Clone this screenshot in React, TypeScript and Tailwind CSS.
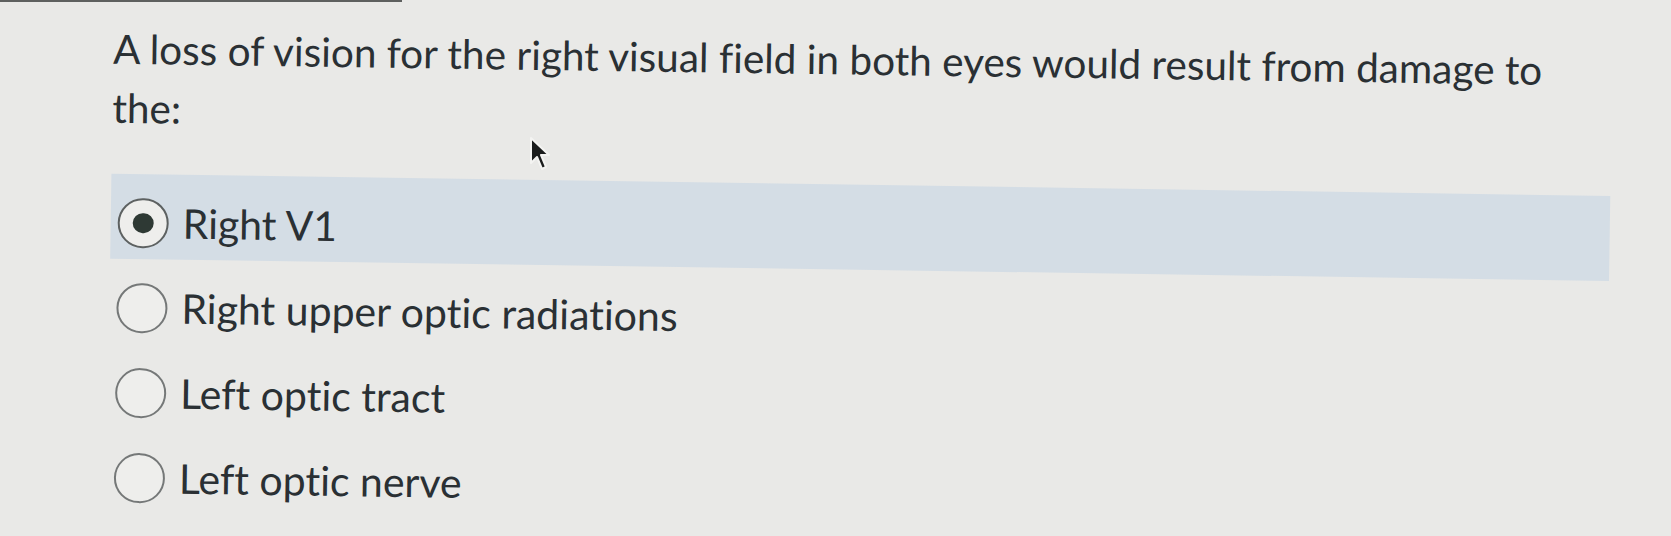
import React from "react";

const options = [
  { label: "Right V1", selected: true },
  { label: "Right upper optic radiations", selected: false },
  { label: "Left optic tract", selected: false },
  { label: "Left optic nerve", selected: false },
];

function Radio({ selected }: { selected: boolean }) {
  return (
    <span
      className={`flex h-[50px] w-[51px] shrink-0 items-center justify-center rounded-full border-2 bg-[#eeeeec] ${
        selected ? "border-[#5d6161]" : "border-[#757878]"
      }`}
    >
      {selected && <span className="h-[20px] w-[21px] rounded-full bg-[#2e3934]" />}
    </span>
  );
}

function Cursor() {
  return (
    <svg
      className="absolute left-[528px] top-[136px]"
      width="24"
      height="36"
      viewBox="0 0 24 36"
    >
      <path
        d="M3 2 L3 27 L9 21 L14 33 L18 31 L13 19 L21 19 Z"
        fill="#1b1d1d"
        stroke="#f4f4f2"
        strokeWidth="2"
        strokeLinejoin="round"
      />
    </svg>
  );
}

export default function App() {
  return (
    <div
      className="relative h-[536px] w-[1671px] overflow-hidden bg-[#e9e9e7] text-[#2a3034] [font-variant-ligatures:none]"
      style={{ fontFamily: "Lato, 'Open Sans', sans-serif" }}
    >
      <div className="absolute left-0 top-0 h-[2px] w-[402px] bg-[#5e605f]" />
      <div className="origin-top-left rotate-[0.85deg] pl-[114px] pt-[17px]">
        <p className="w-[1460px] text-[40.5px] leading-[59px]">
          A loss of vision for the right visual field in both eyes would result from damage to the:
        </p>
        <ul className="mt-[37px] w-[1499px]">
          {options.map((o) => (
            <li
              key={o.label}
              className={`flex h-[85px] items-center gap-[14px] pl-[7px] pt-[12px] ${
                o.selected ? "bg-[#d4dde5]" : ""
              }`}
            >
              <Radio selected={o.selected} />
              <span className="text-[41px] leading-none">{o.label}</span>
            </li>
          ))}
        </ul>
      </div>
      <Cursor />
    </div>
  );
}
